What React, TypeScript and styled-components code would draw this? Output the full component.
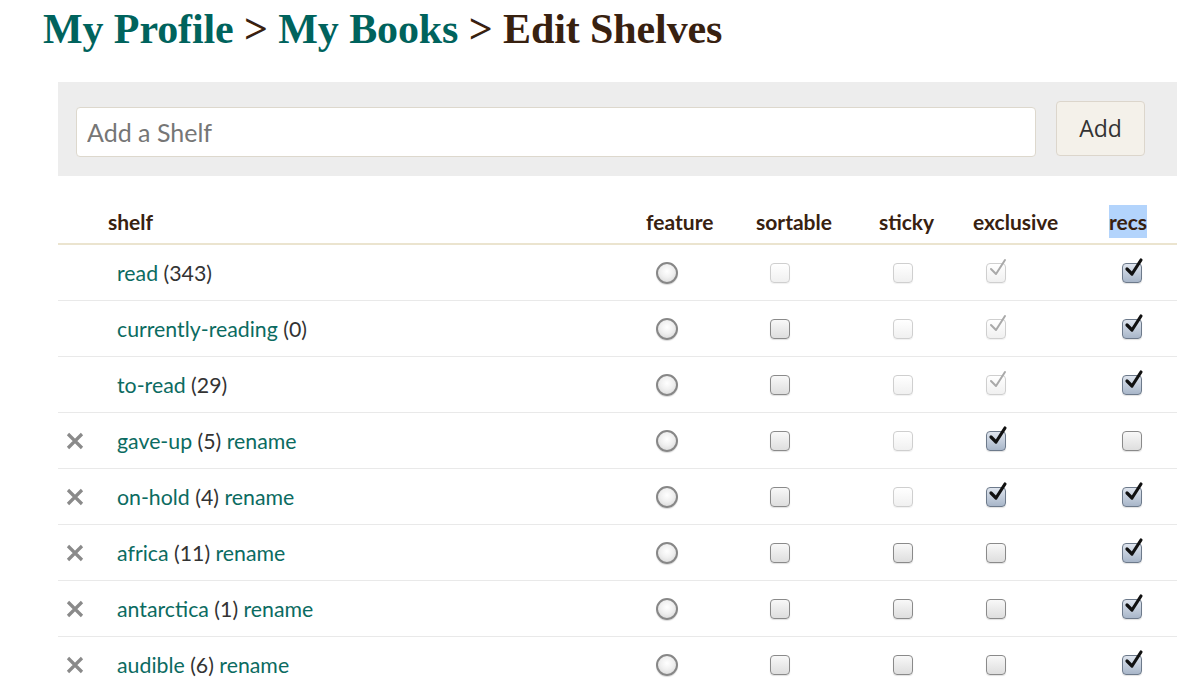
import React from "react";
import styled, { createGlobalStyle, css } from "styled-components";

const GlobalStyle = createGlobalStyle`
  body {
    margin: 0;
    background: #ffffff;
    font-family: Lato, "Open Sans", Arial, sans-serif;
    color: #333333;
  }
`;

const Page = styled.div`
  width: 1200px;
  height: 690px;
  overflow: hidden;
`;

const Heading = styled.h1`
  margin: 0;
  padding: 5px 0 0 43px;
  height: 82px;
  box-sizing: border-box;
  font-family: "Liberation Serif", "Times New Roman", serif;
  font-weight: 700;
  font-size: 42px;
  line-height: 48px;
  color: #382110;
  letter-spacing: -0.1px;
`;

const Crumb = styled.span`
  color: #00635d;
`;

const Panel = styled.div`
  margin-left: 58px;
  width: 1119px;
  height: 94px;
  box-sizing: border-box;
  padding: 19px 32px 0 18px;
  background: #ededed;
  display: flex;
  align-items: flex-start;
  gap: 20px;
`;

const ShelfInput = styled.input`
  width: 960px;
  height: 50px;
  margin-top: 6px;
  box-sizing: border-box;
  border: 1px solid #ddd8cd;
  border-radius: 4px;
  background: #ffffff;
  padding: 0 10px;
  font-family: Lato, "Open Sans", sans-serif;
  font-size: 25px;
  color: #333;
  outline: none;

  &::placeholder {
    color: #767676;
  }
`;

const AddButton = styled.button`
  width: 89px;
  height: 55px;
  box-sizing: border-box;
  border: 1px solid #dcd6cc;
  border-radius: 4px;
  background: #f4f1ea;
  font-family: "Open Sans", Arial, sans-serif;
  font-size: 23px;
  color: #333333;
  padding: 0 0 2px;
`;

const COLS = "50px 538px 110px 123px 94px 136px 68px";

const Table = styled.div`
  margin-left: 58px;
  width: 1119px;
`;

const HeaderRow = styled.div`
  display: grid;
  grid-template-columns: ${COLS};
  height: 69px;
  align-items: end;
  padding-bottom: 5px;
  box-sizing: border-box;
  border-bottom: 2px solid #ebe4cf;
`;

const HeaderCell = styled.div<{ $selected?: boolean }>`
  font-family: Lato, "Open Sans", sans-serif;
  font-weight: 700;
  font-size: 21px;
  line-height: 33px;
  color: #382110;
  justify-self: start;

  ${(p) =>
    p.$selected &&
    css`
      background: #b3d4fc;
    `}
`;

const Row = styled.div`
  display: grid;
  grid-template-columns: ${COLS};
  height: 56px;
  align-items: center;
  border-bottom: 1px solid #e9e9e9;
  box-sizing: border-box;
`;

const DeleteCell = styled.div`
  display: flex;
  padding-left: 8px;
  padding-top: 1px;
`;

const ShelfCell = styled.div`
  padding-left: 9px;
  font-size: 21.3px;
  color: #333333;
  white-space: nowrap;
`;

const ShelfLink = styled.a`
  color: #0b6b61;
  text-decoration: none;
`;

const ControlCell = styled.div<{ $offset: number }>`
  display: flex;
  padding-left: ${(p) => p.$offset}px;
  padding-top: 1px;
`;

const Radio = styled.span`
  width: 22px;
  height: 22px;
  box-sizing: border-box;
  border-radius: 50%;
  border: 2px solid #878787;
  background: radial-gradient(circle at 50% 40%, #ffffff 0%, #f0f0f0 45%, #d2d2d2 100%);
  box-shadow: 0 1px 1px rgba(0, 0, 0, 0.15);
`;

const Box = styled.span<{ $checked: boolean; $disabled: boolean }>`
  position: relative;
  width: 20px;
  height: 20px;
  box-sizing: border-box;
  border-radius: 4px;
  border: 1.5px solid #8a8a8a;
  background: linear-gradient(#f8f8f8, #dedede);
  box-shadow: 0 1px 1px rgba(0, 0, 0, 0.12);

  ${(p) =>
    p.$disabled &&
    css`
      border-color: #cfcfcf;
      background: linear-gradient(#ffffff, #f0f0f0);
      box-shadow: 0 1px 1px rgba(0, 0, 0, 0.06);
    `}

  ${(p) =>
    p.$checked &&
    !p.$disabled &&
    css`
      border-color: #6d7a8b;
      background: linear-gradient(#dfe5ee, #a8b6c9);
    `}
`;

const Tick = styled.svg`
  position: absolute;
  left: 1px;
  top: -7px;
  width: 22px;
  height: 22px;
  overflow: visible;
`;

type Check = { checked: boolean; disabled: boolean };

const on: Check = { checked: true, disabled: false };
const off: Check = { checked: false, disabled: false };
const dis: Check = { checked: false, disabled: true };
const onDis: Check = { checked: true, disabled: true };

type Shelf = {
  name: string;
  count: number;
  custom: boolean;
  sortable: Check;
  sticky: Check;
  exclusive: Check;
  recs: Check;
};

const shelves: Shelf[] = [
  { name: "read", count: 343, custom: false, sortable: dis, sticky: dis, exclusive: onDis, recs: on },
  { name: "currently-reading", count: 0, custom: false, sortable: off, sticky: dis, exclusive: onDis, recs: on },
  { name: "to-read", count: 29, custom: false, sortable: off, sticky: dis, exclusive: onDis, recs: on },
  { name: "gave-up", count: 5, custom: true, sortable: off, sticky: dis, exclusive: on, recs: off },
  { name: "on-hold", count: 4, custom: true, sortable: off, sticky: dis, exclusive: on, recs: on },
  { name: "africa", count: 11, custom: true, sortable: off, sticky: off, exclusive: off, recs: on },
  { name: "antarctica", count: 1, custom: true, sortable: off, sticky: off, exclusive: off, recs: on },
  { name: "audible", count: 6, custom: true, sortable: off, sticky: off, exclusive: off, recs: on },
];

const CheckBox = ({ checked, disabled }: Check) => (
  <Box $checked={checked} $disabled={disabled}>
    {checked && (
      <Tick viewBox="0 0 22 22">
        <path
          d="M3 12 L8 17 L17 3"
          fill="none"
          stroke={disabled ? "#a9a9a9" : "#111111"}
          strokeWidth={disabled ? 2 : 3.2}
          strokeLinecap="round"
          strokeLinejoin="round"
        />
      </Tick>
    )}
  </Box>
);

const DeleteIcon = () => (
  <svg width="18" height="18" viewBox="0 0 18 18">
    <path d="M2 2 L16 16 M16 2 L2 16" stroke="#8a8a8a" strokeWidth="3.2" strokeLinecap="butt" />
  </svg>
);

export default function App() {
  return (
    <Page>
      <GlobalStyle />
      <Heading>
        <Crumb>My Profile</Crumb> &gt; <Crumb>My Books</Crumb> &gt; Edit Shelves
      </Heading>
      <Panel>
        <ShelfInput placeholder="Add a Shelf" />
        <AddButton>Add</AddButton>
      </Panel>
      <Table>
        <HeaderRow>
          <div />
          <HeaderCell>shelf</HeaderCell>
          <HeaderCell>feature</HeaderCell>
          <HeaderCell>sortable</HeaderCell>
          <HeaderCell>sticky</HeaderCell>
          <HeaderCell>exclusive</HeaderCell>
          <HeaderCell $selected>recs</HeaderCell>
        </HeaderRow>
        {shelves.map((s) => (
          <Row key={s.name}>
            <DeleteCell>{s.custom && <DeleteIcon />}</DeleteCell>
            <ShelfCell>
              <ShelfLink href="#">{s.name}</ShelfLink> ({s.count})
              {s.custom && (
                <>
                  {" "}
                  <ShelfLink href="#">rename</ShelfLink>
                </>
              )}
            </ShelfCell>
            <ControlCell $offset={10}>
              <Radio />
            </ControlCell>
            <ControlCell $offset={14}>
              <CheckBox {...s.sortable} />
            </ControlCell>
            <ControlCell $offset={14}>
              <CheckBox {...s.sticky} />
            </ControlCell>
            <ControlCell $offset={13}>
              <CheckBox {...s.exclusive} />
            </ControlCell>
            <ControlCell $offset={13}>
              <CheckBox {...s.recs} />
            </ControlCell>
          </Row>
        ))}
      </Table>
    </Page>
  );
}
